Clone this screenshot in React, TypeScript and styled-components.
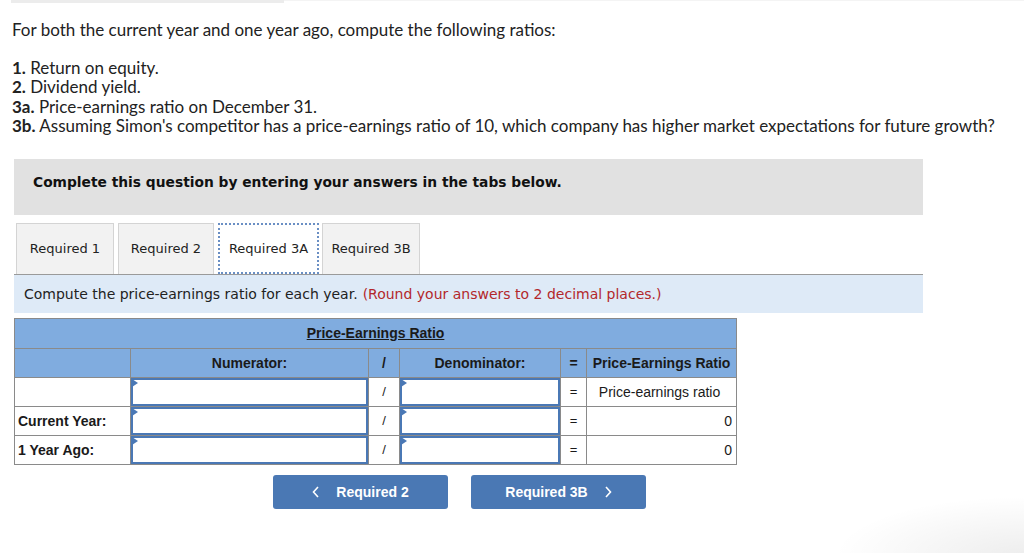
import React from "react";
import styled, { createGlobalStyle } from "styled-components";

const GlobalStyle = createGlobalStyle`
  html, body {
    margin: 0;
    padding: 0;
    background: #fff;
  }
  body {
    width: 1024px;
    height: 553px;
    overflow: hidden;
    background: radial-gradient(ellipse 190px 60px at 1024px 556px, rgba(0,0,0,0.07), rgba(0,0,0,0) 100%), #fff;
  }
`;

const Page = styled.div`
  position: relative;
  width: 1024px;
  height: 553px;
`;

const TopStrip = styled.div`
  display: flex;
  height: 3px;
  margin-left: 11px;

  &::before {
    content: "";
    width: 273px;
    background: #ececec;
  }
  &::after {
    content: "";
    flex: 1;
    height: 1px;
    background: #f4f4f4;
  }
`;

const Question = styled.div`
  padding: 17px 0 0 12px;
  font-family: Lato, "Open Sans", sans-serif;
  font-size: 17px;
  line-height: 19.5px;
  color: #222;
`;

const Intro = styled.p`
  margin: 0 0 18px;
`;

const Item = styled.div`
  b {
    font-weight: 700;
  }
`;

const Notice = styled.div`
  margin: 23px 0 0 14px;
  width: 909px;
  height: 56px;
  background: #e1e1e1;
  padding: 15px 0 0 19px;
  box-sizing: border-box;
  font-family: "DejaVu Sans", Verdana, sans-serif;
  font-weight: 700;
  font-size: 13.8px;
  line-height: 17px;
  color: #111;
`;

const Tabs = styled.div`
  margin: 8px 0 0 16px;
  display: flex;
  height: 51px;
`;

const Tab = styled.div<{ $active?: boolean; $w: number; $gap: number }>`
  width: ${(p) => p.$w}px;
  margin-left: ${(p) => p.$gap}px;
  box-sizing: border-box;
  display: flex;
  align-items: center;
  justify-content: center;
  font-family: "DejaVu Sans", Verdana, sans-serif;
  font-size: 13px;
  color: #222;
  background: ${(p) => (p.$active ? "#fff" : "#f2f2f2")};
  border: ${(p) => (p.$active ? "2px dotted #6a8fc4" : "1px solid #d4d4d4")};
  border-bottom: ${(p) => (p.$active ? "2px dotted #6a8fc4" : "none")};
`;

const Instruction = styled.div`
  margin-left: 14px;
  width: 909px;
  height: 39px;
  box-sizing: border-box;
  border-top: 1px solid #9a9a9a;
  background: #deeaf7;
  display: flex;
  align-items: center;
  padding-left: 10px;
  font-family: "DejaVu Sans", Verdana, sans-serif;
  font-size: 14px;
  color: #222;
`;

const Red = styled.span`
  color: #b3272b;
  margin-left: 5px;
`;

const Table = styled.table`
  margin: 5px 0 0 14px;
  width: 722px;
  border-collapse: collapse;
  font-family: "Liberation Sans", Arial, sans-serif;
  font-size: 14px;
  color: #1a1a1a;
  table-layout: fixed;

  td,
  th {
    border: 1px solid #8a8a8a;
    padding: 0;
  }
`;

const TitleCell = styled.th`
  height: 29px;
  background: #80acdf;
  text-align: center;
  font-weight: 700;

  span {
    text-decoration: underline;
  }
`;

const HeadCell = styled.th`
  height: 28px;
  background: #80acdf;
  font-weight: 700;
  text-align: center;
`;

const LabelCell = styled.td`
  height: 28px;
  font-weight: 700;
  padding-left: 3px !important;
  text-align: left;
`;

const OpCell = styled.td`
  text-align: center;
  font-size: 13px;
`;

const ResultCell = styled.td<{ $align?: string }>`
  text-align: ${(p) => p.$align || "right"};
  padding-right: 4px !important;
`;

const InputCell = styled.td`
  padding: 0 !important;
`;

const Input = styled.div`
  position: relative;
  height: 28px;
  box-sizing: border-box;
  border: 2px solid #4a78b5;
  background: #fff;

  &::before {
    content: "";
    position: absolute;
    left: -1px;
    top: -1px;
    border-top: 4px solid transparent;
    border-bottom: 4px solid transparent;
    border-left: 6px solid #4a78b5;
  }
`;

const Nav = styled.div`
  display: flex;
  gap: 23px;
  margin: 10px 0 0 273px;
`;

const NavButton = styled.div`
  width: 175px;
  height: 34px;
  border-radius: 3px;
  background: #4a78b4;
  color: #fff;
  font-family: "Liberation Sans", Arial, sans-serif;
  font-weight: 700;
  font-size: 14px;
  display: flex;
  align-items: center;
  justify-content: center;
  gap: 16px;
`;

const Chevron = ({ dir }: { dir: "left" | "right" }) => (
  <svg width="8" height="12" viewBox="0 0 8 12">
    <path
      d={dir === "left" ? "M6 1 L1.5 6 L6 11" : "M2 1 L6.5 6 L2 11"}
      fill="none"
      stroke="#fff"
      strokeWidth="1.6"
    />
  </svg>
);

const rows = [
  { label: "", result: "Price-earnings ratio", align: "center" },
  { label: "Current Year:", result: "0", align: "right" },
  { label: "1 Year Ago:", result: "0", align: "right" },
];

export default function App() {
  return (
    <Page>
      <GlobalStyle />
      <TopStrip />
      <Question>
        <Intro>For both the current year and one year ago, compute the following ratios:</Intro>
        <Item>
          <b>1.</b> Return on equity.
        </Item>
        <Item>
          <b>2.</b> Dividend yield.
        </Item>
        <Item>
          <b>3a.</b> Price-earnings ratio on December 31.
        </Item>
        <Item>
          <b>3b.</b> Assuming Simon's competitor has a price-earnings ratio of 10, which company has
          higher market expectations for future growth?
        </Item>
      </Question>
      <Notice>Complete this question by entering your answers in the tabs below.</Notice>
      <Tabs>
        <Tab $w={98} $gap={0}>Required 1</Tab>
        <Tab $w={96} $gap={4}>Required 2</Tab>
        <Tab $w={101} $gap={4} $active>
          Required 3A
        </Tab>
        <Tab $w={98} $gap={3}>Required 3B</Tab>
      </Tabs>
      <Instruction>
        Compute the price-earnings ratio for each year.
        <Red>(Round your answers to 2 decimal places.)</Red>
      </Instruction>
      <Table>
        <colgroup>
          <col style={{ width: 116 }} />
          <col style={{ width: 238 }} />
          <col style={{ width: 31 }} />
          <col style={{ width: 161 }} />
          <col style={{ width: 26 }} />
          <col style={{ width: 150 }} />
        </colgroup>
        <thead>
          <tr>
            <TitleCell colSpan={6}>
              <span>Price-Earnings Ratio</span>
            </TitleCell>
          </tr>
          <tr>
            <HeadCell />
            <HeadCell>Numerator:</HeadCell>
            <HeadCell>/</HeadCell>
            <HeadCell>Denominator:</HeadCell>
            <HeadCell>=</HeadCell>
            <HeadCell>Price-Earnings Ratio</HeadCell>
          </tr>
        </thead>
        <tbody>
          {rows.map((r, i) => (
            <tr key={i}>
              <LabelCell>{r.label}</LabelCell>
              <InputCell>
                <Input />
              </InputCell>
              <OpCell>/</OpCell>
              <InputCell>
                <Input />
              </InputCell>
              <OpCell>=</OpCell>
              <ResultCell $align={r.align}>{r.result}</ResultCell>
            </tr>
          ))}
        </tbody>
      </Table>
      <Nav>
        <NavButton>
          <Chevron dir="left" />
          Required 2
        </NavButton>
        <NavButton>
          Required 3B
          <Chevron dir="right" />
        </NavButton>
      </Nav>
    </Page>
  );
}
